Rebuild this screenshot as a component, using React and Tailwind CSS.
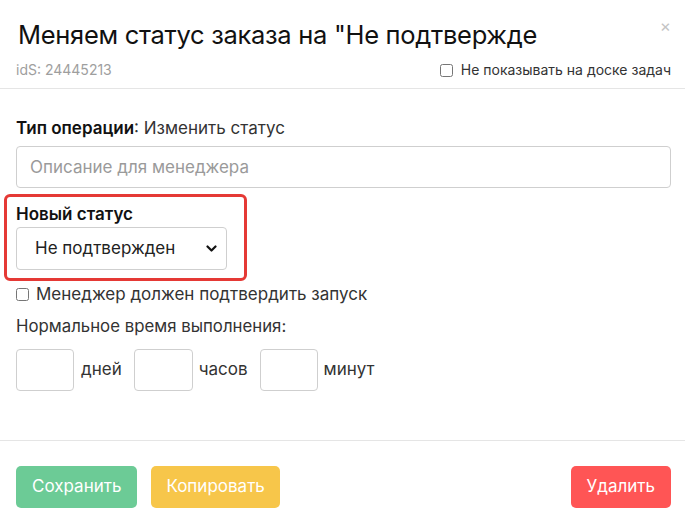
import { useState } from 'react'

export default function App() {
  const [hide, setHide] = useState(false)
  const [confirm, setConfirm] = useState(false)

  return (
    <div className="w-[685px] h-[523px] bg-white text-[#212121] font-['Inter',sans-serif] flex flex-col">
      {/* Header */}
      <div className="relative pl-4 pr-[14px] pt-[17px] border-b border-[#e5e5e5] pb-[9px]">
        <h1 className="text-[25.5px] leading-[36px] pl-[2px] tracking-[-0.3px] text-[#111] whitespace-nowrap overflow-hidden">
          Меняем статус заказа на "Не подтвержде
        </h1>
        <button className="absolute right-[14px] top-[18px] text-[#c4c4c4] text-[17px] leading-none">×</button>
        <div className="flex items-center justify-between mt-[8px] text-[14px] leading-[18px]">
          <span className="text-[#9e9e9e]">idS: 24445213</span>
          <label className="flex items-center gap-[8px] text-[#333]">
            <input
              type="checkbox"
              checked={hide}
              onChange={e => setHide(e.target.checked)}
              className="w-[13px] h-[13px]"
            />
            Не показывать на доске задач
          </label>
        </div>
      </div>

      {/* Body */}
      <div className="pl-4 pr-[14px] pt-[26px] flex-1 border-b border-[#e5e5e5]">
        <p className="text-[17px] leading-[26px] text-[#333]">
          <span className="font-semibold text-[#111]">Тип операции</span>: Изменить статус
        </p>
        <input
          placeholder="Описание для менеджера"
          className="mt-[5px] w-full h-[42px] border border-[#cfcfcf] rounded-[4px] px-[13px] text-[17px] placeholder:text-[#9a9a9a] outline-none"
        />

        <div className="-ml-[12px] mt-[6px] w-[243px] h-[87px] border-[3px] border-[#e53935] rounded-[6px] pl-[9px] pt-[7px]">
          <p className="text-[17px] leading-[20px] font-semibold text-[#111]">Новый статус</p>
          <div className="relative mt-[3px] w-[211px] h-[43px] border border-[#cfcfcf] rounded-[4px] flex items-center pl-[18px]">
            <span className="text-[17px] text-[#222]">Не подтвержден</span>
            <svg className="absolute right-[9px] top-[17px]" width="11" height="8" viewBox="0 0 11 8">
              <path d="M1.5 1.5 L5.5 5.5 L9.5 1.5" stroke="#111" strokeWidth="2.2" fill="none" strokeLinecap="round" strokeLinejoin="round" />
            </svg>
          </div>
        </div>

        <label className="flex items-center gap-[7px] mt-[1px] text-[17px] leading-[24px] text-[#333]">
          <input
            type="checkbox"
            checked={confirm}
            onChange={e => setConfirm(e.target.checked)}
            className="w-[13px] h-[13px]"
          />
          Менеджер должен подтвердить запуск
        </label>
        <p className="mt-[8px] text-[16.8px] leading-[24px] text-[#333]">Нормальное время выполнения:</p>

        <div className="flex items-center mt-[11px] text-[17px] text-[#333]">
          <input className="w-[58px] h-[42px] border border-[#cfcfcf] rounded-[4px] outline-none" />
          <span className="ml-[7px] mr-[12px]">дней</span>
          <input className="w-[59px] h-[42px] border border-[#cfcfcf] rounded-[4px] outline-none" />
          <span className="ml-[6px] mr-[12px]">часов</span>
          <input className="w-[58px] h-[42px] border border-[#cfcfcf] rounded-[4px] outline-none" />
          <span className="ml-[6px]">минут</span>
        </div>
      </div>

      {/* Footer */}
      <div className="h-[82px] pl-4 pr-[14px] flex items-start justify-between pt-[25px]">
        <div className="flex gap-[14px]">
          <button className="h-[42px] px-[16px] rounded-[5px] bg-[#6ccb96] text-white text-[17px]">Сохранить</button>
          <button className="h-[42px] px-[15px] rounded-[5px] bg-[#f7c64a] text-white text-[17px]">Копировать</button>
        </div>
        <button className="h-[42px] px-[16px] rounded-[5px] bg-[#ff5555] text-white text-[17px]">Удалить</button>
      </div>
    </div>
  )
}
